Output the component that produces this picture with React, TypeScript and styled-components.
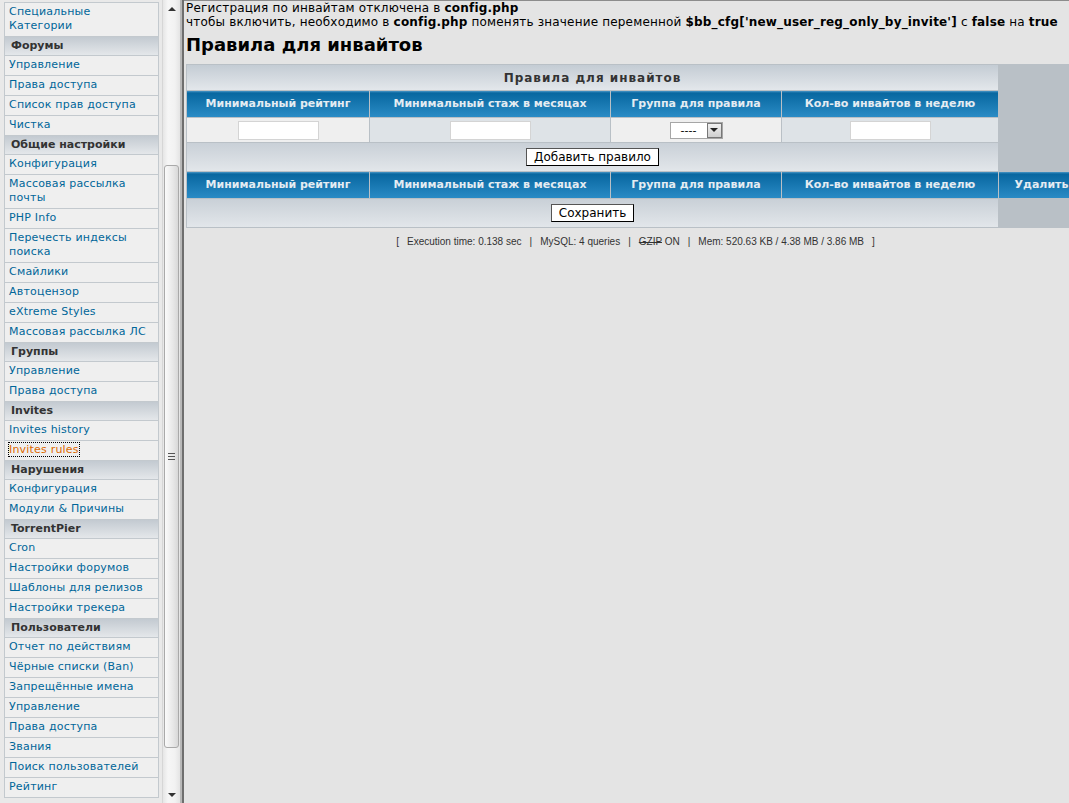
import React from "react";
import styled, { createGlobalStyle } from "styled-components";

const GlobalStyle = createGlobalStyle`
  html, body { margin: 0; padding: 0; height: 100%; overflow: hidden; }
  body {
    background: #e4e4e4;
    font-family: "DejaVu Sans", Verdana, sans-serif;
    color: #000;
  }
`;

type NavEntry = { label: string; head?: boolean; active?: boolean };

const nav: NavEntry[] = [
  { label: "Специальные Категории" },
  { label: "Форумы", head: true },
  { label: "Управление" },
  { label: "Права доступа" },
  { label: "Список прав доступа" },
  { label: "Чистка" },
  { label: "Общие настройки", head: true },
  { label: "Конфигурация" },
  { label: "Массовая рассылка почты" },
  { label: "PHP Info" },
  { label: "Перечесть индексы поиска" },
  { label: "Смайлики" },
  { label: "Автоцензор" },
  { label: "eXtreme Styles" },
  { label: "Массовая рассылка ЛС" },
  { label: "Группы", head: true },
  { label: "Управление" },
  { label: "Права доступа" },
  { label: "Invites", head: true },
  { label: "Invites history" },
  { label: "Invites rules", active: true },
  { label: "Нарушения", head: true },
  { label: "Конфигурация" },
  { label: "Модули & Причины" },
  { label: "TorrentPier", head: true },
  { label: "Cron" },
  { label: "Настройки форумов" },
  { label: "Шаблоны для релизов" },
  { label: "Настройки трекера" },
  { label: "Пользователи", head: true },
  { label: "Отчет по действиям" },
  { label: "Чёрные списки (Ban)" },
  { label: "Запрещённые имена" },
  { label: "Управление" },
  { label: "Права доступа" },
  { label: "Звания" },
  { label: "Поиск пользователей" },
  { label: "Рейтинг" },
];

const Frameset = styled.div`
  display: flex;
  height: 803px;
`;

const NavFrame = styled.div`
  display: flex;
  width: 180px;
  flex-shrink: 0;
  background: #e9e9e9;
`;

const NavScroll = styled.div`
  flex: 1;
  overflow: hidden;
  padding: 2px 2px 0 4px;
`;

const NavTable = styled.div`
  width: 153px;
  border: 1px solid #c3c9ce;
  border-top: none;
`;

const NavRow = styled.div<{ $head?: boolean }>`
  border-top: 1px solid #c3c9ce;
  font-size: 11px;
  line-height: 14px;
  letter-spacing: ${({ $head }) => ($head ? "0" : "0.2px")};
  padding: ${({ $head }) => ($head ? "2px 4px 2px 6px" : "2px 6px 3px 4px")};
  background: ${({ $head }) =>
    $head ? "linear-gradient(to bottom, #c3cad1, #e4e7ea)" : "#efefef"};
  color: ${({ $head }) => ($head ? "#333" : "#006699")};
  font-weight: ${({ $head }) => ($head ? "bold" : "normal")};
`;

const NavLink = styled.a<{ $active?: boolean }>`
  color: ${({ $active }) => ($active ? "#dd6900" : "#006699")};
  text-decoration: none;
  outline: ${({ $active }) => ($active ? "1px dotted #000" : "none")};
`;

const Scrollbar = styled.div`
  width: 17px;
  display: flex;
  flex-direction: column;
  background: linear-gradient(to right, #e6e6e6, #f6f6f6 30%, #f2f2f2 70%, #e4e4e4);
  border-left: 1px solid #d6d6d6;
`;

const ArrowBtn = styled.div<{ $down?: boolean }>`
  height: 17px;
  display: flex;
  align-items: center;
  justify-content: center;
  &::after {
    content: "";
    border-left: 4px solid transparent;
    border-right: 4px solid transparent;
    ${({ $down }) =>
      $down ? "border-top: 4px solid #333;" : "border-bottom: 4px solid #333;"}
  }
`;

const Track = styled.div`
  flex: 1;
  display: flex;
  flex-direction: column;
  align-items: center;
  padding-top: 148px;
`;

const Thumb = styled.div`
  width: 13px;
  height: 581px;
  border: 1px solid #a9a9a9;
  border-radius: 3px;
  background: linear-gradient(to right, #fafafa, #e8e8e8 60%, #d8d8d8);
  display: flex;
  align-items: center;
  justify-content: center;
`;

const Grip = styled.div`
  width: 7px;
  height: 7px;
  background: repeating-linear-gradient(to bottom, #555 0, #555 1px, transparent 1px, transparent 3px);
`;

const FrameBorder = styled.div`
  width: 2px;
  flex-shrink: 0;
  background: #b8b8b8;
  border-right: 2px solid #6e6e6e;
`;

const Main = styled.div`
  flex: 1;
  min-width: 0;
  overflow: hidden;
  border-top: 1px solid #8c8c8c;
  padding: 0 0 0 2px;
  font-size: 12px;
  line-height: 14px;
`;

const Notice = styled.div`
  white-space: nowrap;
  letter-spacing: 0.18px;
`;

const Title = styled.h1`
  font-size: 18px;
  line-height: 22px;
  font-weight: bold;
  margin: 5px 0 8px;
`;

const Forumline = styled.table`
  width: 899px;
  table-layout: fixed;
  border-collapse: separate;
  border-spacing: 1px;
  background: #b9c0c6;
`;

const CatTitle = styled.th`
  height: 25px;
  padding: 0;
  background: linear-gradient(to bottom, #c4ccd4, #e3e7eb);
  color: #333;
  font-size: 12px;
  letter-spacing: 1px;
  font-weight: bold;
  text-align: center;
`;

const HeadCell = styled.th`
  height: 26px;
  padding: 0 4px;
  background: linear-gradient(to bottom, #4a96c6 0px, #0867a0 2px, #2a8bc5 100%);
  color: #e4ecf2;
  font-size: 11px;
  font-weight: bold;
  white-space: nowrap;
  overflow: hidden;
  text-align: center;
`;

const InputCell = styled.td<{ $alt?: boolean }>`
  height: 24px;
  padding: 0;
  text-align: center;
  background: ${({ $alt }) => ($alt ? "#dee3e7" : "#efefef")};
`;

const BottomCell = styled.td`
  height: 28px;
  padding: 0;
  text-align: center;
  background: linear-gradient(to bottom, #c9d0d7, #e2e6ea);
`;

const TextInput = styled.input`
  box-sizing: border-box;
  width: 81px;
  height: 19px;
  border: 1px solid #d4d4d4;
  background: #fff;
  vertical-align: middle;
`;

const FakeSelect = styled.div`
  display: inline-flex;
  align-items: center;
  box-sizing: border-box;
  width: 53px;
  height: 17px;
  border: 1px solid #a6a6a6;
  background: #fff;
  vertical-align: middle;
  font-size: 11px;
`;

const SelectValue = styled.span`
  flex: 1;
  text-align: center;
  line-height: 15px;
`;

const SelectArrow = styled.span`
  width: 15px;
  height: 15px;
  box-sizing: border-box;
  border: 1px solid #777;
  background: linear-gradient(to bottom, #f0f0f0, #cfcfcf);
  display: flex;
  align-items: center;
  justify-content: center;
  &::after {
    content: "";
    border-left: 4px solid transparent;
    border-right: 4px solid transparent;
    border-top: 4px solid #222;
  }
`;

const Button = styled.button`
  font-family: "DejaVu Sans", Verdana, sans-serif;
  font-size: 12px;
  line-height: 14px;
  height: 18px;
  padding: 0 7px;
  background: #fff;
  color: #000;
  border: 1px solid #555;
  border-right-color: #000;
  border-bottom-color: #000;
  vertical-align: middle;
`;

const Footer = styled.div`
  width: 899px;
  margin-top: 7px;
  text-align: center;
  font-family: "Liberation Sans", Tahoma, sans-serif;
  font-size: 10px;
  color: #333;
  white-space: nowrap;
`;

const Strike = styled.span`
  text-decoration: line-through;
`;

const Sep = styled.span`
  margin: 0 4px;
`;

const headers = [
  "Минимальный рейтинг",
  "Минимальный стаж в месяцах",
  "Группа для правила",
  "Кол-во инвайтов в неделю",
];

export default function App() {
  return (
    <>
      <GlobalStyle />
      <Frameset>
        <NavFrame>
          <NavScroll>
            <NavTable>
              {nav.map((n, i) => (
                <NavRow key={i} $head={n.head}>
                  {n.head ? n.label : <NavLink $active={n.active}>{n.label}</NavLink>}
                </NavRow>
              ))}
            </NavTable>
          </NavScroll>
          <Scrollbar>
            <ArrowBtn />
            <Track>
              <Thumb>
                <Grip />
              </Thumb>
            </Track>
            <ArrowBtn $down />
          </Scrollbar>
        </NavFrame>
        <FrameBorder />
        <Main>
          <Notice>
            Регистрация по инвайтам отключена в <b>config.php</b>
          </Notice>
          <Notice>
            чтобы включить, необходимо в <b>config.php</b> поменять значение переменной{" "}
            <b>$bb_cfg['new_user_reg_only_by_invite']</b> с <b>false</b> на <b>true</b>
          </Notice>
          <Title>Правила для инвайтов</Title>
          <Forumline>
            <colgroup>
              <col style={{ width: 182 }} />
              <col style={{ width: 240 }} />
              <col style={{ width: 170 }} />
              <col style={{ width: 216 }} />
              <col style={{ width: 85 }} />
            </colgroup>
            <tbody>
              <tr>
                <CatTitle colSpan={4}>Правила для инвайтов</CatTitle>
              </tr>
              <tr>
                {headers.map((h) => (
                  <HeadCell key={h}>{h}</HeadCell>
                ))}
              </tr>
              <tr>
                <InputCell>
                  <TextInput />
                </InputCell>
                <InputCell $alt>
                  <TextInput />
                </InputCell>
                <InputCell>
                  <FakeSelect>
                    <SelectValue>----</SelectValue>
                    <SelectArrow />
                  </FakeSelect>
                </InputCell>
                <InputCell $alt>
                  <TextInput />
                </InputCell>
              </tr>
              <tr>
                <BottomCell colSpan={4}>
                  <Button>Добавить правило</Button>
                </BottomCell>
              </tr>
              <tr>
                {headers.map((h) => (
                  <HeadCell key={h}>{h}</HeadCell>
                ))}
                <HeadCell>Удалить</HeadCell>
              </tr>
              <tr>
                <BottomCell colSpan={4}>
                  <Button>Сохранить</Button>
                </BottomCell>
              </tr>
            </tbody>
          </Forumline>
          <Footer>
            [<Sep />Execution time: 0.138 sec<Sep />|<Sep />MySQL: 4 queries<Sep />|<Sep />
            <Strike>GZIP</Strike> ON<Sep />|<Sep />Mem: 520.63 KB / 4.38 MB / 3.86 MB<Sep />]
          </Footer>
        </Main>
      </Frameset>
    </>
  );
}
